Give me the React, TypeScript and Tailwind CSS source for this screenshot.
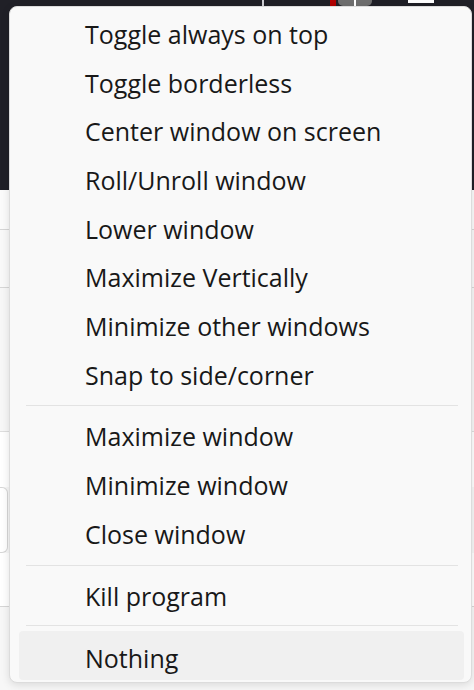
const groups: string[][] = [
  [
    "Toggle always on top",
    "Toggle borderless",
    "Center window on screen",
    "Roll/Unroll window",
    "Lower window",
    "Maximize Vertically",
    "Minimize other windows",
    "Snap to side/corner",
  ],
  ["Maximize window", "Minimize window", "Close window"],
  ["Kill program"],
];

const sepMargins = ["", "mt-[5px] mb-[7px]", "mt-[6px] mb-[7px]"];

function Item({ label, active }: { label: string; active?: boolean }) {
  return (
    <div
      className={
        "mx-[9px] mr-[7px] flex h-[48.7px] items-center rounded-[4px] pl-[66px] " +
        (active ? "bg-[#f0f0f0] pt-[6px]" : "")
      }
    >
      <span className="text-[25px] leading-none text-[#181818]">{label}</span>
    </div>
  );
}

function Separator({ margins }: { margins: string }) {
  return <div className={"ml-[16px] mr-[13px] h-px bg-[#e3e3e3] " + margins} />;
}

export default function App() {
  return (
    <div
      className="relative h-[690px] w-[474px] overflow-hidden bg-[#f7f7f7]"
      style={{ fontFamily: '"Open Sans", "Noto Sans", sans-serif' }}
    >
      {/* window behind the menu */}
      <div className="flex h-[190px] flex-col bg-[#202027]">
        <div className="relative h-[6px]">
          <div className="absolute left-[262px] top-0 h-[6px] w-[2px] bg-[#cfcfd4]" />
          <div className="absolute left-[330px] top-0 h-[6px] w-[6px] bg-[#b00000]" />
          <div className="absolute left-[338px] top-[-4px] h-[10px] w-[34px] rounded-[5px] bg-[#6e6e6e]" />
          <div className="absolute left-[354px] top-0 h-[6px] w-[2px] bg-white" />
          <div className="absolute left-[408px] top-0 h-[3px] w-[26px] bg-white" />
        </div>
      </div>
      <div className="flex flex-col">
        <div className="h-[40px] border-b border-[#d6d6d6] bg-[#fbfbfb]" />
        <div className="h-[58px] border-b border-[#d6d6d6] bg-[#f9f9f9]" />
        <div className="h-[144px] border-b border-[#dedede] bg-[#f7f7f7]" />
        <div className="h-[55px] bg-white" />
        <div className="h-[66px] w-[8px] rounded-r-[6px] border border-l-0 border-[#d6d6d6] bg-white" />
        <div className="h-[54px] border-b border-[#d6d6d6] bg-white" />
      </div>

      {/* context menu */}
      <div className="absolute left-[9px] top-[6px] flex h-[677px] w-[463px] flex-col overflow-hidden rounded-[8px] border border-[#dcdcdc] bg-[#f9f9f9] pt-[3px] shadow-[0_2px_8px_rgba(0,0,0,0.12)]">
        {groups.map((g, i) => (
          <div key={i}>
            {i > 0 && <Separator margins={sepMargins[i]} />}
            {g.map((label) => (
              <Item key={label} label={label} />
            ))}
          </div>
        ))}
        <Separator margins="mt-[4px] mb-[5px]" />
        <Item label="Nothing" active />
      </div>
    </div>
  );
}
